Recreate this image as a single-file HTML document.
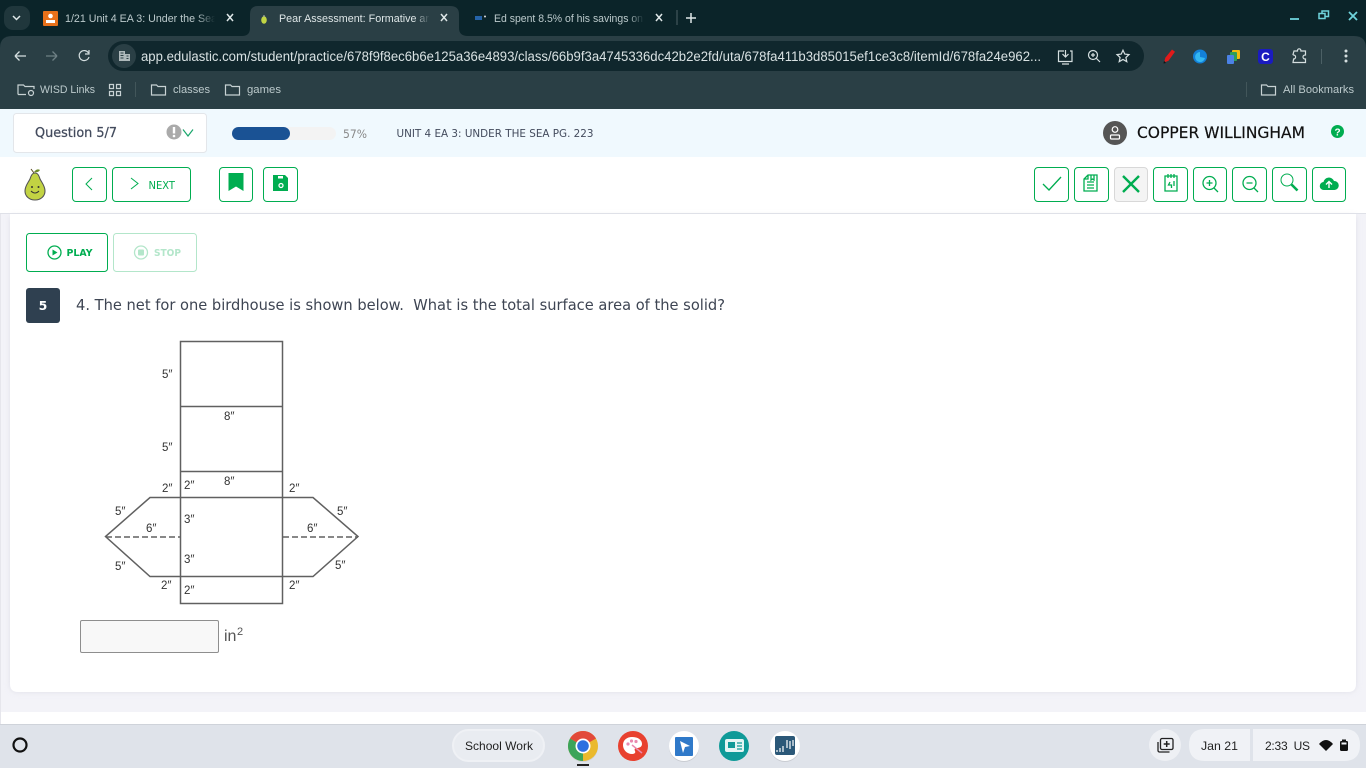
<!DOCTYPE html>
<html><head><meta charset="utf-8"><title>Pear Assessment</title>
<style>
html,body{margin:0;padding:0;width:1366px;height:768px;overflow:hidden;background:#fff}
svg{display:block;position:absolute;left:0;top:0}
text{font-family:"Liberation Sans",sans-serif;white-space:pre}
.dj{font-family:"DejaVu Sans",sans-serif}
.ln{fill:none;stroke:#00ad50;stroke-width:1.3}
.btn{fill:#fff;stroke:#00ad50;stroke-width:1}
.ic{fill:none;stroke:#c8d2d4;stroke-width:1.2}
.d{font-size:11.500px;fill:#333}
.net{fill:none;stroke:#606060;stroke-width:1.500}
</style></head><body>
<svg width="1366" height="768" viewBox="0 0 1366 768" xmlns="http://www.w3.org/2000/svg">
<defs><filter id="sh" x="-2%" y="-5%" width="104%" height="110%"><feGaussianBlur stdDeviation="3"/></filter>
<filter id="bl" x="-5%" y="-5%" width="110%" height="110%"><feGaussianBlur stdDeviation=".35"/></filter>
<linearGradient id="fd"><stop offset="0" stop-color="#0b2429" stop-opacity="0"/><stop offset="1" stop-color="#0b2429"/></linearGradient>
<linearGradient id="fa"><stop offset="0" stop-color="#2a3f45" stop-opacity="0"/><stop offset="1" stop-color="#2a3f45"/></linearGradient></defs>
<!-- Browser chrome -->
<rect width="1366" height="109" fill="#0b2429"/>
<path d="M0 109V48Q0 36 12 36H1354Q1366 36 1366 48V109Z" fill="#2a3f45"/>
<path d="M242 36Q250 36 250 28V14Q250 6 258 6H450Q459 6 459 14V28Q459 36 468 36Z" fill="#2a3f45"/>
<rect x="4" y="6" width="26" height="24" rx="9" fill="#20373c"/>
<path d="M13 16l3.500 3.500L20 16" fill="none" stroke="#dfe7e8" stroke-width="1.500"/>
<rect x="43" y="11" width="15" height="15" rx="1" fill="#e8711a"/>
<circle cx="50.500" cy="16" r="2.300" fill="#fff"/><rect x="46" y="20" width="9" height="3" fill="#fff"/>
<text x="65" y="22" font-size="11" fill="#bccacc" textLength="152" lengthAdjust="spacingAndGlyphs">1/21 Unit 4 EA 3: Under the Sea</text>
<rect x="197" y="8" width="18" height="20" fill="url(#fd)"/><rect x="215" y="8" width="6" height="20" fill="#0b2429"/>
<path d="M227 14l6 7m0-7l-6 7M441 14l6 7m0-7l-6 7M656 14l6 7m0-7l-6 7" stroke="#dfe7e8" stroke-width="1.500"/>
<ellipse cx="264" cy="20" rx="2.800" ry="3.800" fill="#c1d544"/><path d="M264 15v2" stroke="#bbb"/>
<text x="279" y="22" font-size="11" fill="#dfe7e8" textLength="150" lengthAdjust="spacingAndGlyphs">Pear Assessment: Formative ar</text>
<rect x="414" y="8" width="16" height="20" fill="url(#fa)"/><rect x="430" y="8" width="6" height="20" fill="#2a3f45"/>
<rect x="475" y="16" width="7" height="4" fill="#2563a8"/><circle cx="485" cy="16.500" r="1" fill="#ddd"/>
<text x="494" y="22" font-size="11" fill="#bccacc" textLength="149" lengthAdjust="spacingAndGlyphs">Ed spent 8.5% of his savings on</text>
<rect x="628" y="8" width="16" height="20" fill="url(#fd)"/><rect x="644" y="8" width="6" height="20" fill="#0b2429"/>
<rect x="676.500" y="10" width="1" height="15" fill="#4c6065"/>
<path d="M691 13v10M686 18h10" stroke="#dfe7e8" stroke-width="1.500"/>
<path d="M1290 19h9" stroke="#6fd3dc" stroke-width="1.800"/>
<path d="M1319 13.500h6v5h-6zM1322 13v-2h6.500v5.500h-3" fill="none" stroke="#6fd3dc" stroke-width="1.500"/>
<path d="M1349 12l8 8m0-8l-8 8" stroke="#6fd3dc" stroke-width="1.800"/>
<!-- toolbar -->
<path d="M15 56h11M15 56l4.500-4.500M15 56l4.500 4.500" fill="none" stroke="#d5dfe0" stroke-width="1.300"/>
<path d="M46 56h11M57 56l-4.500-4.500M57 56l-4.500 4.500" fill="none" stroke="#6e8085" stroke-width="1.300"/>
<path d="M88.500 53a5 5 0 1 0 .5 4M89 50v4h-4" fill="none" stroke="#d5dfe0" stroke-width="1.200"/>
<rect x="108" y="41" width="1036" height="30" rx="15" fill="#10272d"/>
<circle cx="124" cy="56" r="12" fill="#2a3f45"/>
<path d="M119 51h6v10h-6zM125 54h5v7h-5z" fill="#aeb9bb"/><path d="M120.500 53h3M120.500 55.500h3M120.500 58h3M126.500 56h2M126.500 58.500h2" stroke="#2a3f45"/>
<text x="141" y="61" font-size="13.500" fill="#d8e1e2" textLength="900" lengthAdjust="spacingAndGlyphs">app.edulastic.com/student/practice/678f9f8ec6b6e125a36e4893/class/66b9f3a4745336dc42b2e2fd/uta/678fa411b3d85015ef1ce3c8/itemId/678fa24e962...</text>
<path d="M1064 51h-5.500v10.500h13.500v-10.500h-2M1062 64h7M1065.500 50v7m-3-3l3 3l3-3" fill="none" stroke="#d5dfe0" stroke-width="1.200"/>
<circle cx="1093" cy="55" r="4.500" fill="none" stroke="#d5dfe0" stroke-width="1.200"/><path d="M1096.500 58.500l3.500 3.500M1091 55h4M1093 53v4" stroke="#d5dfe0" stroke-width="1.200"/>
<path d="M1123 50.200l1.800 3.900 4.200.5-3.100 2.900.9 4.200-3.800-2.200-3.800 2.200.9-4.200-3.100-2.900 4.200-.5z" fill="none" stroke="#d5dfe0" stroke-width="1.200"/>
<path d="M1172 49.500l3 2.200-6.500 9-3 1.300-1-1 .8-3.300z" fill="#e01a1a"/><path d="M1164 61l2 2-2.500.5z" fill="#111"/>
<circle cx="1200" cy="56.500" r="7" fill="#1380d8"/><path d="M1200 52v5l5 1a5 5 0 1 1-5-6z" fill="#34b7f1"/>
<rect x="1232" y="50" width="8" height="9" rx="1" fill="#f2b90f"/><rect x="1230" y="52" width="7" height="9" rx="1" fill="#2e9e57"/><rect x="1227" y="55" width="7" height="9" rx="1" fill="#4b82e6"/>
<rect x="1258" y="49" width="15" height="15" rx="3" fill="#1a1bc0"/>
<text x="1265.500" y="61" font-size="12" font-weight="bold" fill="#fff" text-anchor="middle">C</text>
<path d="M1294 51h3.500v-.5a1.700 1.700 0 0 1 3.400 0v.5h4.600v4h-.5a2 2 0 0 0 0 4h.5v3.500h-12.500l.6-3.500a2 2 0 0 0 0-4l-.6-.5z" fill="none" stroke="#d5dfe0" stroke-width="1.200"/>
<rect x="1321" y="49" width="1" height="15" fill="#4c6065"/>
<circle cx="1346" cy="51" r="1.500" fill="#d5dfe0"/><circle cx="1346" cy="56" r="1.500" fill="#d5dfe0"/><circle cx="1346" cy="61" r="1.500" fill="#d5dfe0"/>
<!-- bookmarks -->
<g class="ic">
<path d="M18 94.500V85h5.500l1.500 1.500h9V89M18 94.500h8"/><circle cx="31" cy="93" r="2.500"/>
<path d="M109.500 84.500h4v4h-4zM116.500 84.500h4v4h-4zM109.500 91.500h4v4h-4zM116.500 91.500h4v4h-4z"/>
<path d="M151.500 85h5l1.500 1.500h7.500V95h-14z"/>
<path d="M225.500 85h5l1.500 1.500h7.500V95h-14z"/>
<path d="M1261.500 85h5l1.500 1.500h7.500V95h-14z"/>
</g>
<text x="40" y="93" font-size="11" fill="#bccacc" textLength="55" lengthAdjust="spacingAndGlyphs">WISD Links</text>
<rect x="135" y="82" width="1" height="15" fill="#42565a"/>
<text x="173" y="93" font-size="11" fill="#bccacc" textLength="37" lengthAdjust="spacingAndGlyphs">classes</text>
<text x="247" y="93" font-size="11" fill="#bccacc" textLength="34" lengthAdjust="spacingAndGlyphs">games</text>
<rect x="1246" y="82" width="1" height="15" fill="#42565a"/>
<text x="1283" y="93" font-size="11" fill="#bccacc" textLength="71" lengthAdjust="spacingAndGlyphs">All Bookmarks</text>
<!-- page header -->
<rect y="109" width="1366" height="48" fill="#f0f9fe"/>
<rect x="13.500" y="113.500" width="193" height="39" rx="3" fill="#fff" stroke="#e3e6ea"/>
<text class="dj" x="35" y="137" font-size="13" fill="#434b5d" stroke="#434b5d" stroke-width=".25" textLength="82" lengthAdjust="spacingAndGlyphs">Question 5/7</text>
<circle cx="174" cy="132" r="7.500" fill="#aaa"/><rect x="172.800" y="127" width="2.400" height="6.500" fill="#fff"/><circle cx="174" cy="136" r="1.300" fill="#fff"/>
<path d="M183 129.500l5 6.500l5-6.500" fill="none" stroke="#1aa66c" stroke-width="1.200"/>
<rect x="232" y="127" width="104" height="13" rx="6.500" fill="#f3f3f3"/>
<rect x="232" y="127" width="58" height="13" rx="6.500" fill="#1a5294"/>
<text class="dj" x="343" y="138" font-size="11.500" fill="#888" textLength="24" lengthAdjust="spacingAndGlyphs">57%</text>
<text class="dj" x="396.500" y="137" font-size="11" fill="#434b5d" textLength="197" lengthAdjust="spacingAndGlyphs">UNIT 4 EA 3: UNDER THE SEA PG. 223</text>
<circle cx="1115" cy="133" r="12" fill="#555"/><circle cx="1115" cy="129.500" r="2.800" fill="none" stroke="#fff" stroke-width="1.200"/><rect x="1110.500" y="135" width="9" height="4" rx="1" fill="none" stroke="#fff" stroke-width="1.200"/>
<text class="dj" x="1137" y="138" font-size="16" fill="#111" stroke="#111" stroke-width=".2" textLength="168" lengthAdjust="spacingAndGlyphs">COPPER WILLINGHAM</text>
<circle cx="1337.500" cy="131.500" r="6.500" fill="#00ad50"/>
<text x="1337.500" y="135.500" font-size="10" font-weight="bold" fill="#fff" text-anchor="middle">?</text>
<!-- toolbar white -->
<rect y="157" width="1366" height="56" fill="#fff"/>
<path d="M34 173l-3-4" stroke="#5a4a20" stroke-width="1"/><path d="M34 172q3-4 6-2q-2 3-6 2z" fill="#6e8b2a"/>
<path d="M35 173c3 0 4 3 5 6c2 4 5 7 5 12c0 5-4 9-10 9s-10-4-10-9c0-5 3-8 5-12c1-3 2-6 5-6z" fill="#c2d343" stroke="#555" stroke-width="1.100"/>
<circle cx="32" cy="187" r="1" fill="#333"/><circle cx="38.500" cy="187" r="1" fill="#333"/><path d="M31 191q4 4 8 0" fill="none" stroke="#333" stroke-width="1"/>
<rect x="72.500" y="167.500" width="34" height="34" rx="3.500" class="btn"/><path d="M92 178l-6 6l6 6" fill="none" stroke="#00ad50" stroke-width="1"/>
<rect x="112.500" y="167.500" width="78" height="34" rx="3.500" class="btn"/><path d="M131 178l7 5.500l-7 5.500" fill="none" stroke="#00ad50" stroke-width="1"/>
<text class="dj" x="148.500" y="189" font-size="11" fill="#00ad50" textLength="26.500" lengthAdjust="spacingAndGlyphs">NEXT</text>
<rect x="219.500" y="167.500" width="33" height="34" rx="3.500" class="btn"/><path d="M228.500 173h15v18l-7.500-4.500l-7.500 4.500z" fill="#00ad50"/>
<rect x="263.500" y="167.500" width="34" height="34" rx="3.500" class="btn"/>
<path d="M273 175h12l3 3v13h-15z" fill="#00ad50"/><rect x="278" y="176" width="5" height="2.500" fill="#fff"/><circle cx="281" cy="185.500" r="2" fill="none" stroke="#fff" stroke-width="1.300"/>
<!-- right tools -->
<rect x="1034.500" y="167.500" width="34" height="34" rx="3.500" class="btn"/><path d="M1043 184l6 6l12-13" fill="none" stroke="#00ad50" stroke-width="1.300"/>
<rect x="1074.500" y="167.500" width="34" height="34" rx="3.500" class="btn"/>
<path d="M1088 175h9v16h-13v-12zM1088 175v4h-4M1087 182h7M1087 185h7M1087 188h7M1094 175v5l-1.500-1l-1.500 1v-5" class="ln"/>
<rect x="1114.500" y="167.500" width="33" height="34" rx="3.500" fill="#f4f4f4" stroke="#d8d8d8"/>
<path d="M1123 176l16 16m0-16l-16 16" stroke="#00ad50" stroke-width="2.400"/>
<rect x="1153.500" y="167.500" width="34" height="34" rx="3.500" class="btn"/>
<path d="M1165 176h12v15h-12zM1168 174v4M1171 174v4M1174 174v4M1170 182l-1.500 3h3v3M1174 181v5" class="ln"/>
<rect x="1193.500" y="167.500" width="33" height="34" rx="3.500" class="btn"/>
<circle cx="1209.500" cy="183" r="6.500" class="ln"/><path d="M1214 188l4 4M1206.500 183h6M1209.500 180v6" class="ln"/>
<rect x="1232.500" y="167.500" width="34" height="34" rx="3.500" class="btn"/>
<circle cx="1249.500" cy="183" r="6.500" class="ln"/><path d="M1254 188l4 4M1246.500 183h6" class="ln"/>
<rect x="1272.500" y="167.500" width="34" height="34" rx="3.500" class="btn"/>
<circle cx="1287" cy="180" r="6" fill="none" stroke="#00ad50"/><path d="M1291.500 184.500l6 6" stroke="#00ad50" stroke-width="2.600"/>
<rect x="1312.500" y="167.500" width="33" height="34" rx="3.500" class="btn"/>
<path d="M1324 190a4 4 0 0 1-.5-8a5.500 5.500 0 0 1 10.500-1a4.500 4.500 0 0 1 .5 9z" fill="#00ad50"/><path d="M1329 188v-6m-3 2.500l3-3l3 3" fill="none" stroke="#fff" stroke-width="1.400"/>
<!-- content area -->
<rect y="214" width="1366" height="498" fill="#f3f3f8"/>
<rect y="712" width="1366" height="12" fill="#fff"/>
<rect x="0" y="214" width="1" height="510" fill="#e6e6ec"/>
<path d="M10 216H1356V684Q1356 692 1348 692H18Q10 692 10 684Z" fill="#d8d8e2" filter="url(#sh)" opacity=".7"/>
<rect y="157" width="1366" height="56" fill="#fff" opacity="0"/>
<rect y="213" width="1366" height="1" fill="#dfe1e8"/>
<path d="M10 214H1356V684Q1356 692 1348 692H18Q10 692 10 684Z" fill="#fff"/>
<rect x="26.500" y="233.500" width="81" height="38" rx="3" fill="#fff" stroke="#00ad50"/>
<circle cx="54.500" cy="252.500" r="6.500" fill="none" stroke="#00ad50" stroke-width="1.300"/><path d="M52.500 249.500l5 3l-5 3z" fill="#00ad50"/>
<text class="dj" x="66.500" y="256" font-size="10" font-weight="bold" fill="#00ad50" textLength="26" lengthAdjust="spacingAndGlyphs">PLAY</text>
<rect x="113.500" y="233.500" width="83" height="38" rx="3" fill="#fff" stroke="#b3e6ca"/>
<circle cx="141" cy="252.500" r="6.500" fill="none" stroke="#b3e6ca" stroke-width="1.300"/><rect x="138" y="249.500" width="6" height="6" rx="1" fill="#b3e6ca"/>
<text class="dj" x="154" y="256" font-size="10" fill="#b3e6ca" font-weight="bold" textLength="27" lengthAdjust="spacingAndGlyphs">STOP</text>
<rect x="26" y="288" width="34" height="35" rx="3" fill="#2f4050"/>
<text class="dj" x="43" y="310" font-size="12.500" font-weight="bold" fill="#fff" text-anchor="middle">5</text>
<text class="dj" x="76" y="310" font-size="15.500" fill="#3e4553" textLength="649" lengthAdjust="spacingAndGlyphs">4. The net for one birdhouse is shown below.  What is the total surface area of the solid?</text>
<!-- net -->
<g filter="url(#bl)">
<g class="net">
<rect x="180.500" y="341.500" width="102" height="262"/>
<path d="M180.500 406.500h102M180.500 471.500h102M180.500 497.500h102M180.500 576.500h102"/>
<path d="M180.500 497.500H150L105.500 536.500L150 576.500H180.500M282.500 497.500H313L358 536.500L313 576.500H282.500"/>
<path d="M106 537H180M283 537H358" stroke-dasharray="6 3"/>
</g>
<g class="d">
<text x="162" y="378">5″</text><text x="224" y="420">8″</text>
<text x="162" y="451">5″</text><text x="224" y="485">8″</text>
<text x="162" y="492">2″</text><text x="184" y="489">2″</text><text x="289" y="492">2″</text>
<text x="115" y="515">5″</text><text x="337" y="515">5″</text>
<text x="146" y="532">6″</text><text x="307" y="532">6″</text>
<text x="184" y="523">3″</text><text x="184" y="563">3″</text>
<text x="115" y="570">5″</text><text x="335" y="569">5″</text>
<text x="161" y="589">2″</text><text x="184" y="594">2″</text><text x="289" y="589">2″</text>
</g>
</g>
<rect x="80.500" y="620.500" width="138" height="32" rx="1.500" fill="#f8f8f8" stroke="#8e8e8e"/>
<text x="224" y="641" font-size="16" fill="#555">in</text><text x="237" y="635" font-size="11" fill="#555">2</text>
<!-- shelf -->
<rect y="724" width="1366" height="44" fill="#dfe3ea"/>
<rect y="724" width="1366" height="1" fill="#cfd3da"/>
<circle cx="20" cy="745" r="6.500" fill="none" stroke="#111" stroke-width="2.200"/>
<rect x="453" y="730" width="91" height="31" rx="15.500" fill="#e9ecf1" stroke="#eff1f5" stroke-width="2"/>
<text x="465" y="750" font-size="12" fill="#1f1f1f" textLength="68" lengthAdjust="spacing">School Work</text>
<!-- chrome icon -->
<circle cx="583" cy="747" r="15" fill="#bbb" opacity=".4"/>
<circle cx="583" cy="746" r="15" fill="#eab92d"/>
<path d="M583 746L570 738.500A15 15 0 0 1 596 738.500Z" fill="#e24a3a"/>
<path d="M583 746L570 738.500A15 15 0 0 0 583 761Z" fill="#3ba45a"/>
<circle cx="583" cy="746" r="7.500" fill="#fff"/><circle cx="583" cy="746" r="5.800" fill="#2e6fe0"/>
<rect x="577" y="764" width="12" height="2" fill="#222"/>
<circle cx="633" cy="746" r="15" fill="#e8412f"/>
<path d="M623 745c0-5 4-8 9-8c6 0 10 3 10 7c0 3-3 4-5 4c-2 0-3 1-2 3c1 2-1 3-3 3c-5 0-9-4-9-9z" fill="#fff"/>
<circle cx="628" cy="744" r="1.600" fill="#e98ab0"/><circle cx="631.500" cy="741" r="1.600" fill="#e98ab0"/><circle cx="636" cy="741.500" r="1.600" fill="#e98ab0"/>
<path d="M632 745l10 8" stroke="#e98ab0" stroke-width="1.500"/>
<circle cx="684" cy="747" r="15" fill="#c9ccd2"/><circle cx="684" cy="746" r="15" fill="#fff"/>
<rect x="675" y="737" width="18" height="19" rx="1" fill="#2f79c9"/><path d="M680 741l10 5l-5 1l-2 6z" fill="#fff"/>
<circle cx="734" cy="746" r="15" fill="#0f9a98"/>
<rect x="725" y="739" width="19" height="13" rx="2" fill="#e4f5f4"/><rect x="728" y="742" width="7" height="6" fill="#0f9a98"/><path d="M737 743h5M737 746h5M737 749h5" stroke="#0f9a98" stroke-width="1.300"/>
<circle cx="785" cy="747" r="15" fill="#c9ccd2"/><circle cx="785" cy="746" r="15" fill="#fff"/>
<rect x="775" y="736" width="20" height="19" rx="2" fill="#2b5878"/>
<path d="M777 752v-2M780 752v-4M783 752v-6M787 748v-8M790 749v-8M793 746v-6" stroke="#fff" stroke-width="1.200"/>
<circle cx="1165" cy="745" r="16" fill="#eef0f4"/>
<path d="M1158 742v8.500a1.500 1.500 0 0 0 1.500 1.500h10" fill="none" stroke="#222" stroke-width="1.300"/>
<rect x="1160.500" y="738.500" width="12.500" height="11" rx="1.500" fill="#eef0f4" stroke="#222" stroke-width="1.300"/><path d="M1166.700 741v6M1163.700 744h6" stroke="#222" stroke-width="1.500"/>
<path d="M1205 729H1250V761H1205Q1189 761 1189 745Q1189 729 1205 729Z" fill="#f0f2f6"/>
<text x="1201" y="750" font-size="12" fill="#1f1f1f" textLength="37" lengthAdjust="spacingAndGlyphs">Jan 21</text>
<path d="M1253 729H1344Q1360 729 1360 745Q1360 761 1344 761H1253Z" fill="#f0f2f6"/>
<text x="1265" y="750" font-size="12" fill="#1f1f1f" textLength="45" lengthAdjust="spacing">2:33  US</text>
<path d="M1319 744q7-8 14 0l-7 7z" fill="#111"/>
<rect x="1340" y="741" width="8" height="10" rx="1.200" fill="#111"/><rect x="1342" y="739.500" width="4" height="2" fill="#111"/><rect x="1341.500" y="742.500" width="5" height="2" fill="#f0f2f6"/>
</svg>
</body></html>
